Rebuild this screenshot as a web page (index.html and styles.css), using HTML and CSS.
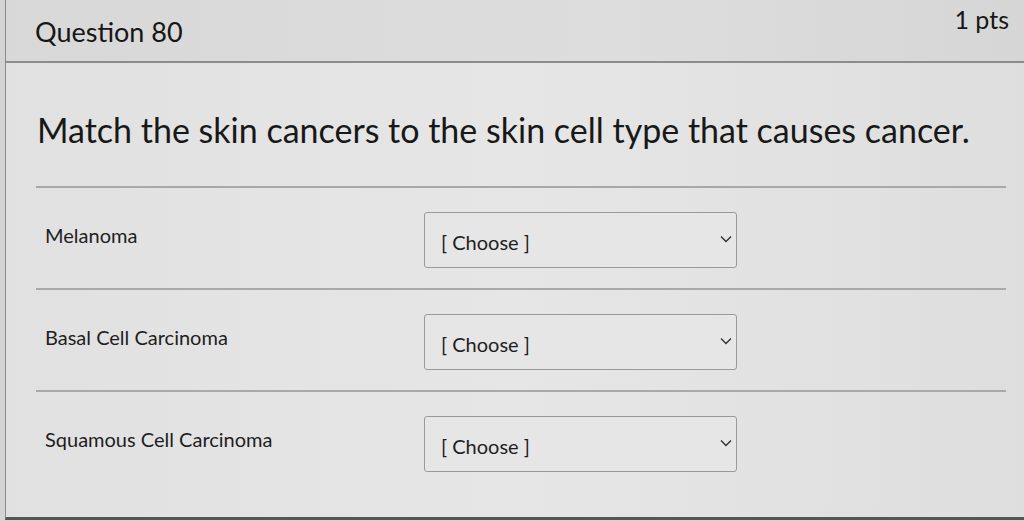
FILE: index.html
```html
<!DOCTYPE html>
<html lang="en">
<head>
    <meta charset="UTF-8">
    <title>Question 80</title>
    <link rel="stylesheet" href="styles.css">
</head>
<body>
    <div class="question">
        <div class="question-header">
            <span class="question-name">Question 80</span>
            <span class="question-points">1 pts</span>
        </div>

        <div class="question-body">
            <p class="question-text">Match the skin cancers to the skin cell type that causes cancer.</p>

            <div class="answer-row">
                <div class="answer-label">Melanoma</div>
                <div class="answer-select">
                    <span>[ Choose ]</span>
                    <svg class="chevron" viewBox="0 0 12 8" width="12" height="8"><path d="M1 1.5 L6 6.5 L11 1.5" fill="none" stroke="#333" stroke-width="1.4"/></svg>
                </div>
            </div>

            <div class="answer-row">
                <div class="answer-label">Basal Cell Carcinoma</div>
                <div class="answer-select">
                    <span>[ Choose ]</span>
                    <svg class="chevron" viewBox="0 0 12 8" width="12" height="8"><path d="M1 1.5 L6 6.5 L11 1.5" fill="none" stroke="#333" stroke-width="1.4"/></svg>
                </div>
            </div>

            <div class="answer-row last">
                <div class="answer-label">Squamous Cell Carcinoma</div>
                <div class="answer-select">
                    <span>[ Choose ]</span>
                    <svg class="chevron" viewBox="0 0 12 8" width="12" height="8"><path d="M1 1.5 L6 6.5 L11 1.5" fill="none" stroke="#333" stroke-width="1.4"/></svg>
                </div>
            </div>
        </div>
    </div>
</body>
</html>
```

FILE: styles.css
```css
body {
    margin: 0;
    font-family: Lato, "Liberation Sans", sans-serif;
    color: #1c1c1c;
    background: #d4d4d4;
    height: 521px;
    overflow: hidden;
}
.question {
    margin-left: 5px;
    height: 517px;
    border-left: 1px solid #8a8a8a;
    border-bottom: 3px solid #555;
    background: linear-gradient(90deg, #e1e1e1 0%, #e6e6e6 50%, #dedede 100%);
}
.question-header {
    display: flex;
    justify-content: space-between;
    height: 61px;
    padding: 0 15px 0 29px;
    background: linear-gradient(90deg, #d8d8d8, #dddddd 60%, #d6d6d6);
    border-bottom: 2px solid #8c8c8c;
}
.question-name {
    font-size: 27px;
    padding-top: 15px;
    color: #161616;
}
.question-points {
    font-size: 25px;
    padding-top: 4px;
    color: #161616;
}
.question-body {
    padding: 0 18px 0 30px;
}
.question-text {
    margin: 0;
    padding: 46px 0 35px 1px;
    font-size: 34px;
    line-height: 42px;
    color: #181818;
    border-bottom: 2px solid #a8a8a8;
}
.answer-row {
    display: flex;
    align-items: flex-start;
    height: 100px;
    padding-left: 9px;
    border-bottom: 2px solid #a9a9a9;
}
.answer-row.last {
    border-bottom: none;
}
.answer-label {
    width: 379px;
    font-size: 20px;
    padding-top: 35px;
    color: #1e1e1e;
}
.answer-select {
    display: flex;
    align-items: center;
    justify-content: space-between;
    box-sizing: border-box;
    width: 313px;
    height: 56px;
    margin-top: 24px;
    padding: 4px 4px 0 16px;
    font-size: 20px;
    color: #1e1e1e;
    background: #e6e6e6;
    border: 1px solid #9a9a9a;
    border-radius: 3px;
}
.chevron {
    margin-bottom: 6px;
}
```
